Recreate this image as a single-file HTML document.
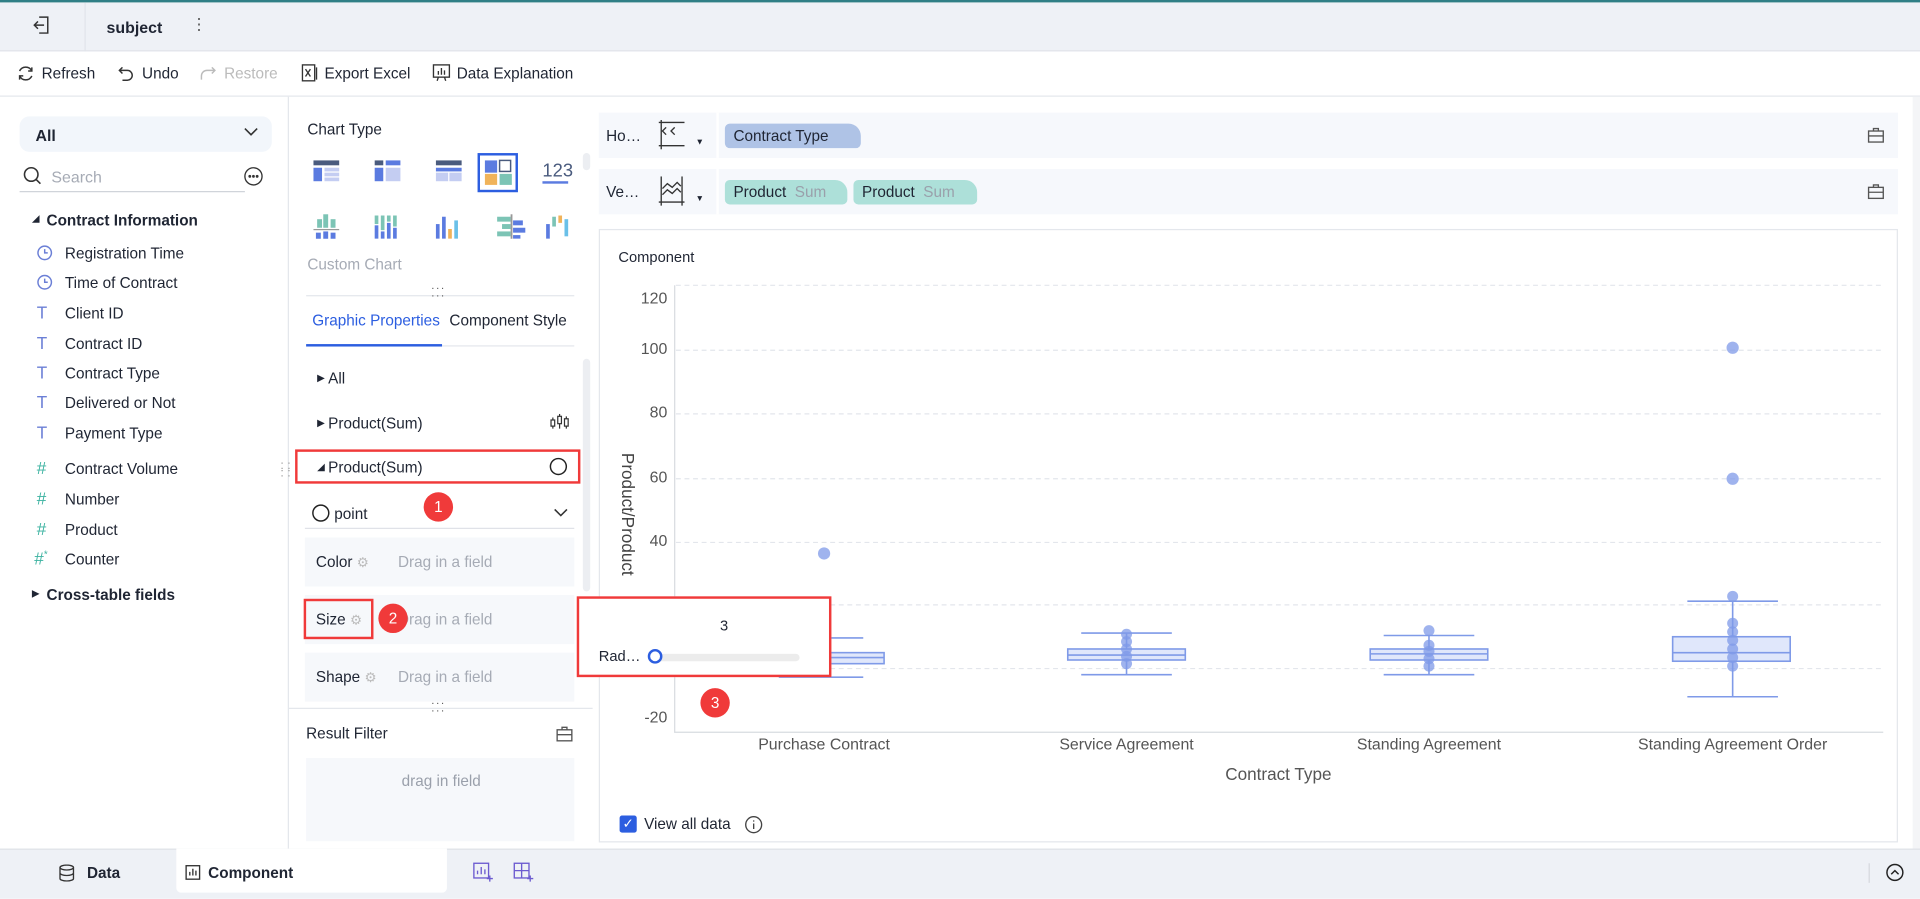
<!DOCTYPE html>
<html><head><meta charset="utf-8">
<style>
*{box-sizing:border-box;margin:0;padding:0}
html,body{width:1920px;height:899px;overflow:hidden;background:#fff}
#w{position:absolute;left:0;top:0;width:1568px;height:734px;transform:scale(1.22449);transform-origin:0 0;font-family:"Liberation Sans",sans-serif;color:#1f2533;font-size:12.5px}
.a{position:absolute;white-space:nowrap}
.ic{position:absolute}
.gray{color:#9aa0ab}
</style></head><body><div id="w">
<!-- top bar -->
<div class="a" style="left:0;top:0;width:1568px;height:2px;background:#2f7f86"></div>
<div class="a" style="left:0;top:2px;width:1568px;height:40px;background:#eef1f6;border-bottom:1px solid #e1e4ea"></div>
<div class="a" style="left:69px;top:2px;width:1px;height:40px;background:#e1e4ea"></div>
<svg class="ic" style="left:27px;top:13px" width="14" height="15" viewBox="0 0 14 15" fill="none" stroke="#333" stroke-width="1.2"><path d="M5 1h7v13H5M9 7.5H1M4 4.5l-3 3 3 3"/></svg>
<div class="a" style="left:87px;top:15px;font-weight:bold;font-size:13px">subject</div>
<div class="a" style="left:156px;top:12px;font-size:13px;color:#555">⋮</div>
<!-- toolbar -->
<div class="a" style="left:0;top:78px;width:1568px;height:1px;background:#e4e7ec"></div>
<svg class="ic" style="left:14px;top:53px" width="14" height="14" viewBox="0 0 14 14" fill="none" stroke="#333" stroke-width="1.2"><path d="M12 5A5.5 5.5 0 0 0 2 5M2 9a5.5 5.5 0 0 0 10 0M12 2v3H9M2 12V9h3"/></svg>
<div class="a" style="left:34px;top:53px">Refresh</div>
<svg class="ic" style="left:96px;top:53px" width="14" height="14" viewBox="0 0 14 14" fill="none" stroke="#333" stroke-width="1.2"><path d="M4 2L1.5 4.5 4 7M1.5 4.5H8a4 4 0 0 1 0 8H4"/></svg>
<div class="a" style="left:116px;top:53px">Undo</div>
<svg class="ic" style="left:163px;top:53px" width="14" height="14" viewBox="0 0 14 14" fill="none" stroke="#bbb" stroke-width="1.2"><path d="M10 2l2.5 2.5L10 7M12.5 4.5H6a4.5 4.5 0 0 0-4.5 4.5v3"/></svg>
<div class="a" style="left:183px;top:53px;color:#bbb">Restore</div>
<svg class="ic" style="left:246px;top:52px" width="14" height="15" viewBox="0 0 14 15" fill="none" stroke="#333" stroke-width="1.1"><rect x="1" y="1" width="10" height="13"/><path d="M12.5 3v10M3.5 4.5l4 6M7.5 4.5l-4 6"/></svg>
<div class="a" style="left:265px;top:53px">Export Excel</div>
<svg class="ic" style="left:353px;top:52px" width="15" height="15" viewBox="0 0 15 15" fill="none" stroke="#333" stroke-width="1.1"><rect x="1" y="1" width="13" height="10"/><path d="M5 9V6M7.5 9V3.5M10 9V5.5M5 11l-1 3M10 11l1 3"/></svg>
<div class="a" style="left:373px;top:53px">Data Explanation</div>
<!-- left panel -->
<div class="a" style="left:235px;top:79px;width:1px;height:614px;background:#e4e7ec"></div>
<div class="a" style="left:16px;top:95px;width:206px;height:29px;background:#f2f6fb;border-radius:8px"></div>
<div class="a" style="left:29px;top:103px;font-weight:bold;font-size:13px">All</div>
<svg class="ic" style="left:199px;top:104px" width="12" height="8" viewBox="0 0 12 8" fill="none" stroke="#333" stroke-width="1.3"><path d="M1 1l5 5 5-5"/></svg>
<svg class="ic" style="left:19px;top:136px" width="15" height="15" viewBox="0 0 15 15" fill="none" stroke="#333" stroke-width="1.3"><circle cx="6.5" cy="6.5" r="5.5"/><path d="M10.5 10.5l3.5 3.5"/></svg>
<div class="a gray" style="left:42px;top:137px;font-size:13px;color:#a6abb5">Search</div>
<div class="a" style="left:16px;top:156px;width:184px;height:1px;background:#cfd3da"></div>
<svg class="ic" style="left:199px;top:136px" width="16" height="16" viewBox="0 0 16 16" fill="none" stroke="#333" stroke-width="1.1"><circle cx="8" cy="8" r="7"/><circle cx="5" cy="8" r=".6" fill="#333"/><circle cx="8" cy="8" r=".6" fill="#333"/><circle cx="11" cy="8" r=".6" fill="#333"/></svg>
<div class="a" style="left:26px;top:174px;font-size:8px">◢</div>
<div class="a" style="left:38px;top:173px;font-weight:bold">Contract Information</div>
<svg class="ic" style="left:30px;top:200px" width="13" height="13" viewBox="0 0 13 13" fill="none" stroke="#6b7fd6" stroke-width="1.2"><circle cx="6.5" cy="6.5" r="5.5"/><path d="M6.5 3.5v3h2.5"/></svg>
<div class="a" style="left:53px;top:200px">Registration Time</div>
<svg class="ic" style="left:30px;top:224px" width="13" height="13" viewBox="0 0 13 13" fill="none" stroke="#6b7fd6" stroke-width="1.2"><circle cx="6.5" cy="6.5" r="5.5"/><path d="M6.5 3.5v3h2.5"/></svg>
<div class="a" style="left:53px;top:224px">Time of Contract</div>
<div class="a" style="left:30px;top:247px;color:#6b7fd6;font-size:14px">T</div><div class="a" style="left:53px;top:249px">Client ID</div>
<div class="a" style="left:30px;top:272px;color:#6b7fd6;font-size:14px">T</div><div class="a" style="left:53px;top:274px">Contract ID</div>
<div class="a" style="left:30px;top:296px;color:#6b7fd6;font-size:14px">T</div><div class="a" style="left:53px;top:298px">Contract Type</div>
<div class="a" style="left:30px;top:320px;color:#6b7fd6;font-size:14px">T</div><div class="a" style="left:53px;top:322px">Delivered or Not</div>
<div class="a" style="left:30px;top:345px;color:#6b7fd6;font-size:14px">T</div><div class="a" style="left:53px;top:347px">Payment Type</div>
<div class="a" style="left:30px;top:374px;color:#3bb2a0;font-size:14px">#</div><div class="a" style="left:53px;top:376px">Contract Volume</div>
<div class="a" style="left:30px;top:399px;color:#3bb2a0;font-size:14px">#</div><div class="a" style="left:53px;top:401px">Number</div>
<div class="a" style="left:30px;top:424px;color:#3bb2a0;font-size:14px">#</div><div class="a" style="left:53px;top:426px">Product</div>
<div class="a" style="left:28px;top:448px;color:#3bb2a0;font-size:14px">#<sup style="font-size:8px">*</sup></div><div class="a" style="left:53px;top:450px">Counter</div>
<div class="a" style="left:26px;top:480px;font-size:8px">▶</div>
<div class="a" style="left:38px;top:479px;font-weight:bold">Cross-table fields</div>
<div class="a" style="left:229px;top:378px;color:#999;font-size:10px;line-height:6px">: :<br>: :</div>
<!-- middle panel -->
<div class="a" style="left:251px;top:99px">Chart Type</div>
<svg class="ic" style="left:250px;top:125px" width="225" height="70" viewBox="0 0 225 70">
<g><rect x="6" y="6" width="21" height="4" fill="#4a5b7e"/><rect x="6" y="12" width="7" height="11" fill="#5b7be0"/><rect x="15" y="12" width="12" height="3" fill="#c4cdf2"/><rect x="15" y="16" width="12" height="3" fill="#c4cdf2"/><rect x="15" y="20" width="12" height="3" fill="#c4cdf2"/></g>
<g transform="translate(50,0)"><rect x="6" y="6" width="7" height="4" fill="#4a5b7e"/><rect x="15" y="6" width="12" height="4" fill="#5b7be0"/><rect x="6" y="12" width="7" height="11" fill="#5b7be0"/><rect x="15" y="12" width="12" height="11" fill="#c4cdf2"/></g>
<g transform="translate(100,0)"><rect x="6" y="6" width="21" height="4" fill="#4a5b7e"/><rect x="6" y="12" width="21" height="3" fill="#5b7be0"/><rect x="6" y="16" width="10" height="7" fill="#c4cdf2"/><rect x="17" y="16" width="10" height="7" fill="#c4cdf2"/></g>
<rect x="141" y="1" width="31" height="30" fill="#fff" stroke="#2c5ee0" stroke-width="2"/>
<rect x="146" y="6" width="10" height="10" fill="#5b7be0"/><rect x="158" y="6" width="9" height="9" fill="#fff" stroke="#4a5b7e" stroke-width="1.2"/><rect x="146" y="17" width="10" height="9" fill="#f0b35a"/><rect x="158" y="17" width="10" height="9" fill="#7cc4b5"/>
<text x="193" y="19" font-family="Liberation Sans" font-size="15" fill="#4a5b7e">123</text><rect x="193" y="23" width="21" height="2" fill="#5b7be0"/>
<g transform="translate(0,48)"><rect x="9" y="6" width="4" height="7" fill="#7cc4b5"/><rect x="14" y="2" width="4" height="11" fill="#7cc4b5"/><rect x="20" y="6" width="4" height="7" fill="#7cc4b5"/><rect x="6" y="14" width="21" height="1" fill="#999"/><rect x="8" y="17" width="4" height="6" fill="#5b7be0"/><rect x="14" y="16" width="4" height="7" fill="#5b7be0"/><rect x="20" y="17" width="4" height="6" fill="#5b7be0"/></g>
<g transform="translate(50,48)"><rect x="6" y="3" width="3" height="7" fill="#7cc4b5"/><rect x="6" y="11" width="3" height="11" fill="#5b7be0"/><rect x="11" y="3" width="3" height="12" fill="#7cc4b5"/><rect x="11" y="16" width="3" height="6" fill="#5b7be0"/><rect x="16" y="3" width="3" height="5" fill="#7cc4b5"/><rect x="16" y="9" width="3" height="13" fill="#5b7be0"/><rect x="21" y="3" width="3" height="9" fill="#7cc4b5"/><rect x="21" y="13" width="3" height="9" fill="#5b7be0"/></g>
<g transform="translate(100,48)"><rect x="6" y="10" width="3" height="12" fill="#5b7be0"/><rect x="11" y="4" width="3" height="18" fill="#5b7be0"/><rect x="16" y="14" width="3" height="8" fill="#f0b35a"/><rect x="21" y="7" width="3" height="15" fill="#6ac0e8"/></g>
<g transform="translate(150,48)"><rect x="6" y="4" width="11" height="4" fill="#7cc4b5"/><rect x="10" y="10" width="7" height="4" fill="#7cc4b5"/><rect x="6" y="16" width="11" height="4" fill="#7cc4b5"/><rect x="17" y="2" width="1.5" height="22" fill="#999"/><rect x="19" y="7" width="8" height="4" fill="#5b7be0"/><rect x="19" y="13" width="10" height="4" fill="#5b7be0"/><rect x="19" y="19" width="6" height="3" fill="#5b7be0"/></g>
<g transform="translate(190,48)"><rect x="6" y="10" width="3" height="12" fill="#5b7be0"/><rect x="11" y="4" width="3" height="8" fill="#7cc4b5"/><rect x="16" y="3" width="3" height="6" fill="#f0b35a"/><rect x="21" y="6" width="3" height="14" fill="#6ac0e8"/></g>
</svg>
<div class="a" style="left:476px;top:125px;width:6px;height:14px;background:#eceef2;border-radius:3px"></div>
<div class="a" style="left:251px;top:209px;color:#a6abb5">Custom Chart</div>
<div class="a" style="left:250px;top:241px;width:219px;height:1px;background:#e4e7ec"></div>
<div class="a" style="left:352px;top:232px;font-size:9px;color:#555;line-height:6px;letter-spacing:1px">···<br>···</div>
<div class="a" style="left:255px;top:255px;color:#2c5ee0">Graphic Properties</div>
<div class="a" style="left:367px;top:255px">Component Style</div>
<div class="a" style="left:250px;top:282px;width:219px;height:1px;background:#e4e7ec"></div>
<div class="a" style="left:250px;top:281px;width:111px;height:2px;background:#2c5ee0"></div>
<div class="a" style="left:476px;top:293px;width:6px;height:190px;background:#eceef2;border-radius:3px"></div>
<div class="a" style="left:259px;top:304px;font-size:8px">▶</div><div class="a" style="left:268px;top:302px">All</div>
<div class="a" style="left:259px;top:341px;font-size:8px">▶</div><div class="a" style="left:268px;top:339px">Product(Sum)</div>
<svg class="ic" style="left:449px;top:338px" width="16" height="14" viewBox="0 0 16 14" fill="none" stroke="#333" stroke-width="1"><rect x="1" y="5" width="3" height="5"/><rect x="6.5" y="2" width="3" height="6"/><rect x="12" y="4" width="3" height="6"/><path d="M2.5 3v2M2.5 10v2M8 0v2M8 8v4M13.5 2v2M13.5 10v2"/></svg>
<div class="a" style="left:241px;top:367px;width:233px;height:28px;border:2px solid #f03a3a"></div>
<div class="a" style="left:259px;top:377px;font-size:8px">◢</div><div class="a" style="left:268px;top:375px">Product(Sum)</div>
<svg class="ic" style="left:448px;top:373px" width="16" height="16" viewBox="0 0 16 16" fill="none" stroke="#222" stroke-width="1.2"><circle cx="8" cy="8" r="6.5"/></svg>
<svg class="ic" style="left:254px;top:411px" width="16" height="16" viewBox="0 0 16 16" fill="none" stroke="#222" stroke-width="1.2"><circle cx="8" cy="8" r="6.5"/></svg>
<div class="a" style="left:273px;top:413px">point</div>
<svg class="ic" style="left:452px;top:415px" width="12" height="8" viewBox="0 0 12 8" fill="none" stroke="#333" stroke-width="1.3"><path d="M1 1l5 5 5-5"/></svg>
<div class="a" style="left:249px;top:431px;width:220px;height:1px;background:#dfe2e8"></div>
<div class="a" style="left:346px;top:402px;width:24px;height:24px;border-radius:12px;background:#f03a3a;color:#fff;text-align:center;line-height:24px">1</div>
<div class="a" style="left:249px;top:439px;width:220px;height:40px;background:#f6f8fb"></div>
<div class="a" style="left:258px;top:452px">Color <span style="color:#bbb;font-size:11px">⚙</span></div>
<div class="a" style="left:325px;top:452px;color:#a6abb5">Drag in a field</div>
<div class="a" style="left:249px;top:486px;width:220px;height:40px;background:#f6f8fb"></div>
<div class="a" style="left:258px;top:499px">Size <span style="color:#bbb;font-size:11px">⚙</span></div>
<div class="a" style="left:325px;top:499px;color:#a6abb5">Drag in a field</div>
<div class="a" style="left:248px;top:489px;width:57px;height:33px;border:2px solid #f03a3a"></div>
<div class="a" style="left:309px;top:493px;width:24px;height:24px;border-radius:12px;background:#f03a3a;color:#fff;text-align:center;line-height:24px">2</div>
<div class="a" style="left:249px;top:533px;width:220px;height:40px;background:#f6f8fb"></div>
<div class="a" style="left:258px;top:546px">Shape <span style="color:#bbb;font-size:11px">⚙</span></div>
<div class="a" style="left:325px;top:546px;color:#a6abb5">Drag in a field</div>
<div class="a" style="left:236px;top:578px;width:248px;height:1px;background:#e4e7ec"></div>
<div class="a" style="left:352px;top:571px;font-size:9px;color:#555;line-height:6px;letter-spacing:1px">···<br>···</div>
<div class="a" style="left:250px;top:592px">Result Filter</div>
<svg class="ic" style="left:454px;top:592px" width="14" height="14" viewBox="0 0 14 14" fill="none" stroke="#555" stroke-width="1.1"><rect x="1" y="4" width="12" height="9"/><path d="M5 4V2h4v2M1 8h12"/></svg>
<div class="a" style="left:250px;top:619px;width:219px;height:68px;background:#f6f8fb"></div>
<div class="a" style="left:328px;top:631px;color:#9aa0ab">drag in field</div>
<!-- right -->
<div class="a" style="left:489px;top:92px;width:1061px;height:37px;background:#f6f8fc"></div>
<div class="a" style="left:585px;top:92px;width:2px;height:37px;background:#fff"></div>
<div class="a" style="left:495px;top:104px">Ho…</div>
<svg class="ic" style="left:537px;top:98px" width="24" height="24" viewBox="0 0 24 24" fill="none" stroke="#333" stroke-width="1.1"><path d="M1 2h21M1 21h21M3 0v24M7 6l-3 3 3 3M14 6l-3 3 3 3"/></svg>
<div class="a" style="left:568px;top:113px;font-size:7px">▼</div>
<div class="a" style="left:592px;top:101px;width:111px;height:20px;background:#afc3e6;border-radius:4px 10px 4px 4px;padding:3px 7px">Contract Type</div>
<svg class="ic" style="left:1525px;top:103px" width="14" height="14" viewBox="0 0 14 14" fill="none" stroke="#555" stroke-width="1.1"><rect x="1" y="4" width="12" height="9"/><path d="M5 4V2h4v2M1 8h12"/></svg>
<div class="a" style="left:489px;top:138px;width:1061px;height:37px;background:#f6f8fc"></div>
<div class="a" style="left:585px;top:138px;width:2px;height:37px;background:#fff"></div>
<div class="a" style="left:495px;top:150px">Ve…</div>
<svg class="ic" style="left:537px;top:144px" width="24" height="24" viewBox="0 0 24 24" fill="none" stroke="#333" stroke-width="1.1"><path d="M1 21h21M3 0v24M20 0v24M4 10l4-4 4 3 4-4 3 3M4 15l4-4 4 3 4-4 3 3"/></svg>
<div class="a" style="left:568px;top:159px;font-size:7px">▼</div>
<div class="a" style="left:592px;top:147px;width:100px;height:20px;background:#ade0d9;border-radius:4px 10px 4px 4px;padding:3px 7px">Product <span class="gray">&nbsp;Sum</span></div>
<div class="a" style="left:697px;top:147px;width:101px;height:20px;background:#ade0d9;border-radius:4px 10px 4px 4px;padding:3px 7px">Product <span class="gray">&nbsp;Sum</span></div>
<svg class="ic" style="left:1525px;top:149px" width="14" height="14" viewBox="0 0 14 14" fill="none" stroke="#555" stroke-width="1.1"><rect x="1" y="4" width="12" height="9"/><path d="M5 4V2h4v2M1 8h12"/></svg>
<div class="a" style="left:489px;top:187px;width:1061px;height:501px;border:1px solid #e4e7ec;background:#fff"></div>
<div class="a" style="left:505px;top:203px;font-size:12px">Component</div>
<svg class="ic" style="left:0;top:0" width="1568" height="734" viewBox="0 0 1568 734" font-family="Liberation Sans" font-size="13" fill="#555">
<g stroke="#e3e6ec" stroke-dasharray="4 3"><path d="M552 233H1538M552 286H1538M552 338H1538M552 391H1538M552 443H1538M552 494H1538M552 546H1538"/></g>
<path d="M551 233V598H1538" stroke="#d8dbe0" fill="none"/>
<g text-anchor="end"><text x="545" y="248">120</text><text x="545" y="289">100</text><text x="545" y="341">80</text><text x="545" y="394">60</text><text x="545" y="446">40</text><text x="545" y="590">-20</text></g>
<text transform="translate(508 420) rotate(90)" text-anchor="middle" font-size="14" fill="#444">Product/Product</text>
<g text-anchor="middle"><text x="673" y="612">Purchase Contract</text><text x="920" y="612">Service Agreement</text><text x="1167" y="612">Standing Agreement</text><text x="1415" y="612">Standing Agreement Order</text><text x="1044" y="637" font-size="14">Contract Type</text></g>
<g stroke="#7f9ae8" stroke-width="1.3" fill="#e0e7fb">
<path d="M636 521H705M636 553H705M673 521V553" fill="none"/><rect x="626" y="533" width="96" height="9"/><path d="M626 537H722"/>
<path d="M883 517H957M883 551H957M920 517V551" fill="none"/><rect x="872" y="530" width="96" height="9"/><path d="M872 535H968"/>
<path d="M1130 519H1204M1130 551H1204M1167 519V551" fill="none"/><rect x="1119" y="530" width="96" height="9"/><path d="M1119 534H1215"/>
<path d="M1378 491H1452M1378 569H1452M1415 491V569" fill="none"/><rect x="1366" y="520" width="96" height="20"/><path d="M1366 533H1462"/>
</g>
<g fill="#7f9ae8" fill-opacity=".75">
<circle cx="673" cy="452" r="5"/>
<circle cx="920" cy="518" r="4.5"/><circle cx="920" cy="524" r="4.5"/><circle cx="920" cy="530" r="4.5"/><circle cx="920" cy="536" r="4.5"/><circle cx="920" cy="542" r="4.5"/>
<circle cx="1167" cy="515" r="4.5"/><circle cx="1167" cy="527" r="4.5"/><circle cx="1167" cy="532" r="4.5"/><circle cx="1167" cy="538" r="4.5"/><circle cx="1167" cy="544" r="4.5"/>
<circle cx="1415" cy="284" r="5"/><circle cx="1415" cy="391" r="5"/><circle cx="1415" cy="487" r="4.5"/><circle cx="1415" cy="509" r="4.5"/><circle cx="1415" cy="516" r="4.5"/><circle cx="1415" cy="523" r="4.5"/><circle cx="1415" cy="530" r="4.5"/><circle cx="1415" cy="537" r="4.5"/><circle cx="1415" cy="544" r="4.5"/>
</g>
</svg>
<div class="a" style="left:471px;top:487px;width:208px;height:66px;border:2px solid #f03a3a;background:#fff"></div>
<div class="a" style="left:588px;top:504px;font-size:12px">3</div>
<div class="a" style="left:489px;top:529px;font-size:12px">Rad…</div>
<div class="a" style="left:530px;top:534px;width:123px;height:6px;background:#ececec;border-radius:3px"></div>
<div class="a" style="left:529px;top:530px;width:12px;height:12px;border:2px solid #2c5ee0;border-radius:6px;background:#fff"></div>
<div class="a" style="left:572px;top:562px;width:24px;height:24px;border-radius:12px;background:#f03a3a;color:#fff;text-align:center;line-height:24px">3</div>
<div class="a" style="left:506px;top:666px;width:14px;height:14px;background:#2c5ee0;border-radius:2px;color:#fff;font-size:11px;line-height:14px;text-align:center">✓</div>
<div class="a" style="left:526px;top:666px">View all data</div>
<svg class="ic" style="left:608px;top:666px" width="15" height="15" viewBox="0 0 15 15" fill="none" stroke="#444" stroke-width="1.1"><circle cx="7.5" cy="7.5" r="6.5"/><path d="M7.5 6.5v4.5M7.5 4v1"/></svg>
<div class="a" style="left:1562px;top:79px;width:6px;height:614px;background:#f4f5f7"></div>
<!-- bottom -->
<div class="a" style="left:0;top:693px;width:1568px;height:41px;background:#eef1f6;border-top:1px solid #dfe2e8"></div>
<div class="a" style="left:144px;top:693px;width:221px;height:36px;background:#fff;border-radius:0 0 4px 4px"></div>
<svg class="ic" style="left:48px;top:706px" width="13" height="14" viewBox="0 0 13 14" fill="none" stroke="#333" stroke-width="1.1"><ellipse cx="6.5" cy="2.5" rx="5.5" ry="2"/><path d="M1 2.5v9c0 1.1 2.5 2 5.5 2s5.5-.9 5.5-2v-9M1 7c0 1.1 2.5 2 5.5 2s5.5-.9 5.5-2"/></svg>
<div class="a" style="left:71px;top:706px;font-weight:bold">Data</div>
<svg class="ic" style="left:151px;top:706px" width="13" height="13" viewBox="0 0 13 13" fill="none" stroke="#333" stroke-width="1.1"><rect x="1" y="1" width="11" height="11"/><path d="M4 9V6M6.5 9V3.5M9 9V5"/></svg>
<div class="a" style="left:170px;top:706px;font-weight:bold">Component</div>
<svg class="ic" style="left:386px;top:704px" width="17" height="17" viewBox="0 0 17 17" fill="none" stroke="#6c5bd0" stroke-width="1.1"><rect x="1" y="1" width="12" height="12"/><path d="M4 10V7M7 10V4M10 10V6M14 11v5M11.5 13.5h5"/></svg>
<svg class="ic" style="left:419px;top:704px" width="17" height="17" viewBox="0 0 17 17" fill="none" stroke="#6c5bd0" stroke-width="1.1"><rect x="1" y="1" width="12" height="12"/><path d="M1 7h12M7 1v12M14 11v5M11.5 13.5h5"/></svg>
<div class="a" style="left:1526px;top:705px;width:1px;height:16px;background:#d5d8de"></div>
<svg class="ic" style="left:1540px;top:705px" width="15" height="15" viewBox="0 0 15 15" fill="none" stroke="#222" stroke-width="1.2"><circle cx="7.5" cy="7.5" r="6.5"/><path d="M4.5 9l3-3 3 3"/></svg>
</div></body></html>
